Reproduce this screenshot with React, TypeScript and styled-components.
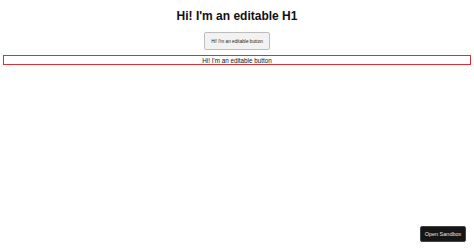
import React from "react";
import styled, { createGlobalStyle } from "styled-components";

const GlobalStyle = createGlobalStyle`
  html, body {
    margin: 0;
    padding: 0;
    background: #ffffff;
    font-family: "Liberation Sans", Arial, sans-serif;
    color: #000;
  }
`;

const Page = styled.div`
  display: flex;
  flex-direction: column;
  align-items: center;
  padding: 0 3px;
`;

const Title = styled.h1`
  margin: 9px 0 0;
  font-size: 12px;
  line-height: 14px;
  font-weight: bold;
  color: #111;
`;

const EditableButton = styled.button`
  margin-top: 9px;
  width: 66px;
  height: 18px;
  padding: 0;
  font-family: "Liberation Sans", Arial, sans-serif;
  font-size: 4.7px;
  color: #222;
  background: #f2f2f2;
  border: 1px solid #bdbdbd;
  border-radius: 2px;
`;

const OutlinedBox = styled.div`
  align-self: stretch;
  margin-top: 5px;
  height: 10px;
  border: 1.5px solid #dc2f35;
  box-sizing: border-box;
  display: flex;
  align-items: center;
  justify-content: center;
  font-size: 6.3px;
  color: #111;
`;

const SandboxLink = styled.a`
  position: fixed;
  right: 8px;
  bottom: 6px;
  width: 46px;
  height: 16px;
  box-sizing: border-box;
  display: flex;
  align-items: center;
  justify-content: center;
  background: #151515;
  border: 1px solid #444;
  border-radius: 2px;
  color: #e8e8e8;
  font-size: 5.5px;
  text-decoration: none;
`;

export default function App() {
  return (
    <>
      <GlobalStyle />
      <Page>
        <Title>Hi! I'm an editable H1</Title>
        <EditableButton>Hi! I'm an editable button</EditableButton>
        <OutlinedBox>Hi! I'm an editable button</OutlinedBox>
      </Page>
      <SandboxLink href="#">Open Sandbox</SandboxLink>
    </>
  );
}
